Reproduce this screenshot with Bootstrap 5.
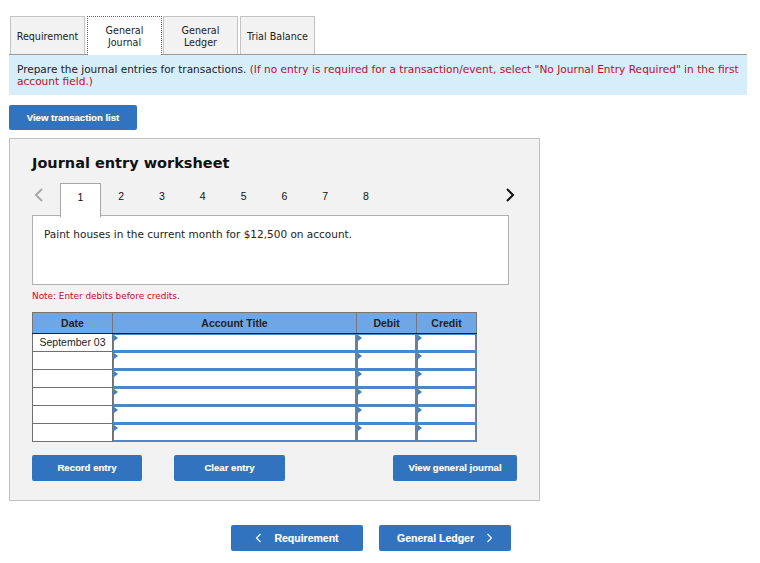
<!DOCTYPE html>
<html lang="en"><head><meta charset="utf-8"><title>Journal entry worksheet</title>
<link href="https://cdn.jsdelivr.net/npm/bootstrap@5.3.0/dist/css/bootstrap.min.css" rel="stylesheet">
<style>
body{background:#fff;color:#111;font-family:"DejaVu Sans",Verdana,sans-serif;font-size:10.5px;padding:16px 13px 0 9px;margin:0}
.tabbar{border-bottom:1px solid #999;height:39px;padding-left:1px;gap:2px}
.sheet-tab{width:75px;height:38px;padding-top:2px;background:#f2f2f2;border:1px solid #c4c4c4;border-bottom:0;font-size:9.6px;line-height:12px;color:#222;text-align:center}
.sheet-tab.on{background:#fff;height:39px;width:75px;margin-right:-1px;margin-bottom:-1px;padding-top:2px;border:1px dotted #2f6db5;border-bottom:0}
.prompt{background:#d6edfa;height:40px;padding:8px 2px 0 8px;font-size:10.5px;line-height:12px;color:#222}
.prompt em{font-style:normal;font-size:10.6px;color:#c00d1e}
.bluebtn{background:#3273bf;color:#fff;border:0;border-radius:2px;font:bold 9.6px/12px "Liberation Sans",Arial,sans-serif;height:26px;padding:0;-webkit-text-stroke:.15px #fff}
.bluebtn:hover,.bluebtn:active{background:#3273bf;color:#fff}
.w-list{width:128px;height:25px;margin-top:10px}
.panel{width:531px;height:363px;margin-top:8px;background:#f2f2f2;border:1px solid #c0c0c0;padding:14px 22px 0}
.panel-title{font-size:14.5px;line-height:20px;font-weight:700;margin:0;color:#111}
.stepper{height:33px;margin-top:10px;position:relative}
.arrow{width:28px}
.step{width:40.8px;text-align:center;font:10.5px/26px "Liberation Sans",Arial,sans-serif;color:#111;height:33px}
.step.on{background:#fff;border:1px solid #a6a6a6;border-bottom:0;height:34px;margin-bottom:-1px;position:relative;z-index:1}
.nxt{position:absolute;left:472px;top:4px}
.prv{position:absolute;left:1px;top:4px}
.scenario{width:477px;height:70px;margin-top:-1px;background:#fff;border:1px solid #b0b0b0;padding:12px 11px;font-size:10.5px;line-height:13px;color:#222}
.note{font-size:8.9px;line-height:11px;color:#c00d1e;margin-top:6px}
.jtable{border-collapse:collapse;table-layout:fixed;width:444px;margin-top:10px;font:10.5px "Liberation Sans",Arial,sans-serif}
.jtable th{background:#6ea6e6;height:21px;padding:0;text-align:center;font-size:10.5px;font-weight:700;color:#222;border:1px solid #777;border-left-color:#222;border-bottom:1px solid #222}
.jtable th:first-child{border-left-color:#777}
.jtable td{height:18px;padding:0 0 1px;background:#fff;border:1px solid #707070;text-align:center;color:#222}
.jtable td.cellin{border:1px solid #6f7f92;box-shadow:inset 1px 1px 0 #4f86c8,inset -1px -1px 0 #4f86c8;position:relative}
.jtable td.cellin::before{content:"";position:absolute;left:1px;top:1px;border-left:4px solid #3a7fd0;border-top:3px solid transparent;border-bottom:3px solid transparent}
.actions{margin-top:13px;width:485px}
.w-rec{width:110px}.w-clr{width:111px;margin-left:32px}.w-view{width:124px;margin-left:auto}
.pager{padding-left:222px;margin-top:24px;gap:16px}
.w-nav{width:132px;font-size:10.5px}
.w-nav svg{vertical-align:-1px}
</style></head><body>
<div class="tabbar d-flex align-items-end">
<div class="sheet-tab d-flex align-items-center justify-content-center">Requirement</div>
<div class="sheet-tab on d-flex align-items-center justify-content-center">General<br>Journal</div>
<div class="sheet-tab d-flex align-items-center justify-content-center">General<br>Ledger</div>
<div class="sheet-tab d-flex align-items-center justify-content-center">Trial Balance</div>
</div>
<div class="prompt">Prepare the journal entries for transactions. <em>(If no entry is required for a transaction/event, select "No Journal Entry Required" in the first account field.)</em></div>
<button class="btn bluebtn w-list d-block" type="button">View transaction list</button>
<div class="panel">
<h2 class="panel-title">Journal entry worksheet</h2>
<div class="stepper d-flex">
<svg class="prv" width="12" height="16" viewBox="0 0 12 16"><path d="M9 2 3 8l6 6" fill="none" stroke="#a8a8a8" stroke-width="2"/></svg>
<div class="arrow"></div>
<div class="step on">1</div><div class="step">2</div><div class="step">3</div><div class="step">4</div><div class="step">5</div><div class="step">6</div><div class="step">7</div><div class="step">8</div>
<svg class="nxt" width="12" height="16" viewBox="0 0 12 16"><path d="M3 2l6 6-6 6" fill="none" stroke="#111" stroke-width="2"/></svg>
</div>
<div class="scenario">Paint houses in the current month for $12,500 on account.</div>
<div class="note">Note: Enter debits before credits.</div>
<table class="jtable">
<colgroup><col style="width:80px"><col style="width:244px"><col style="width:60px"><col style="width:60px"></colgroup>
<thead><tr><th>Date</th><th>Account Title</th><th>Debit</th><th>Credit</th></tr></thead>
<tbody>
<tr><td>September 03</td><td class="cellin"></td><td class="cellin"></td><td class="cellin"></td></tr>
<tr><td></td><td class="cellin"></td><td class="cellin"></td><td class="cellin"></td></tr>
<tr><td></td><td class="cellin"></td><td class="cellin"></td><td class="cellin"></td></tr>
<tr><td></td><td class="cellin"></td><td class="cellin"></td><td class="cellin"></td></tr>
<tr><td></td><td class="cellin"></td><td class="cellin"></td><td class="cellin"></td></tr>
<tr><td></td><td class="cellin"></td><td class="cellin"></td><td class="cellin"></td></tr>
</tbody></table>
<div class="actions d-flex">
<button class="btn bluebtn w-rec" type="button">Record entry</button>
<button class="btn bluebtn w-clr" type="button">Clear entry</button>
<button class="btn bluebtn w-view" type="button">View general journal</button>
</div>
</div>
<div class="pager d-flex">
<button class="btn bluebtn w-nav" type="button"><svg width="7" height="10" viewBox="0 0 7 10"><path d="M5.5 1 1.5 5l4 4" fill="none" stroke="#fff" stroke-width="1.1"/></svg><span class="ms-2 ps-1">Requirement</span></button>
<button class="btn bluebtn w-nav" type="button"><span class="me-2 pe-1">General Ledger</span><svg width="7" height="10" viewBox="0 0 7 10"><path d="M1.5 1l4 4-4 4" fill="none" stroke="#fff" stroke-width="1.1"/></svg></button>
</div>
<script src="https://cdn.jsdelivr.net/npm/bootstrap@5.3.0/dist/js/bootstrap.bundle.min.js"></script>
</body></html>
